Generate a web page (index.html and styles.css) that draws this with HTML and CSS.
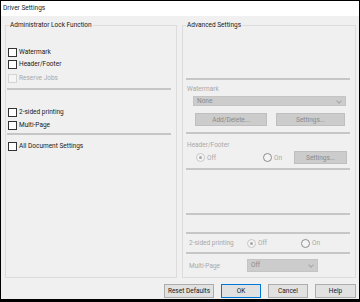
FILE: index.html
```html
<!DOCTYPE html>
<html>
  <head>
    <meta charset="UTF-8">
    <title>Driver Settings</title>
    <link rel="stylesheet" href="styles.css">
  </head>
  <body>
    <div id="dialog">
      <div id="titlebar">Driver Settings</div>

      <div id="panes">
        <div class="group" id="lockGroup">
          <span class="legend">Administrator Lock Function</span>

          <div class="check first"><span class="box"></span>Watermark</div>
          <div class="check"><span class="box"></span>Header/Footer</div>
          <div class="check off reserve"><span class="box"></span>Reserve Jobs</div>
          <div class="sep sepA"></div>

          <div class="check duplex"><span class="box"></span>2-sided printing</div>
          <div class="check multi"><span class="box"></span>Multi-Page</div>
          <div class="sep sepB"></div>
          <div class="check alldoc"><span class="box"></span>All Document Settings</div>
        </div>

        <div class="group" id="advGroup">
          <span class="legend">Advanced Settings</span>

          <div class="sep sep1"></div>
          <div class="label wmLabel">Watermark</div>
          <div class="select wmSelect">None<span class="arrow"></span></div>
          <div class="btnRow">
            <button class="btn dis addDel">Add/Delete...</button>
            <button class="btn dis wmSet">Settings...</button>
          </div>
          <div class="sep sep2"></div>

          <div class="label hfLabel">Header/Footer</div>
          <div class="radioRow">
            <span class="radio hfOff"><span class="dot on"></span>Off</span>
            <span class="radio hfOn"><span class="dot"></span>On</span>
            <button class="btn dis hfSet">Settings...</button>
          </div>
          <div class="sep sep3"></div>
          <div class="sep sep4"></div>
          <div class="sep sep5"></div>

          <div class="optRow duplexRow">
            <span class="optLabel">2-sided printing</span>
            <span class="radio dOff"><span class="dot on"></span>Off</span>
            <span class="radio dOn"><span class="dot"></span>On</span>
          </div>
          <div class="sep sep6"></div>
          <div class="optRow mpRow">
            <span class="optLabel">Multi-Page</span>
            <div class="select mpSelect">Off<span class="arrow"></span></div>
          </div>
        </div>
      </div>

      <div id="footer">
        <button class="btn reset">Reset Defaults</button>
        <button class="btn ok">OK</button>
        <button class="btn">Cancel</button>
        <button class="btn">Help</button>
      </div>
    </div>
  </body>
</html>
```

FILE: styles.css
```css
body {
  margin: 0;
  background: #fff;
  font-family: Roboto, "Noto Sans", sans-serif;
  font-size: 6.5px;
  color: #1a1a1a;
}

#dialog {
  width: 360px;
  height: 302px;
  box-sizing: border-box;
  border: 1px solid #000;
  border-bottom-width: 3px;
  background: #f0f0f0;
}

#titlebar {
  height: 15px;
  line-height: 14px;
  padding-left: 2px;
  background: #fff;
}

#panes {
  display: flex;
  gap: 5px;
  padding: 9px 0 0 4px;
}

.group {
  position: relative;
  height: 253px;
  box-sizing: border-box;
  border: 1px solid #dcdcdc;
}

#lockGroup {
  width: 172px;
}

#advGroup {
  width: 174px;
}

.legend {
  position: absolute;
  top: -6px;
  left: 3px;
  padding: 0 1px;
  line-height: 10px;
  background: #f0f0f0;
}

/* checkboxes */

.check {
  display: flex;
  align-items: center;
  height: 12px;
  padding-left: 2px;
}

.check .box {
  width: 7px;
  height: 7px;
  margin-right: 2px;
  border: 1px solid #333;
  background: #fff;
}

.check.off {
  color: #a8a8a8;
}

.check.off .box {
  border-color: #d4d4d4;
  background: #f4f4f4;
}

.first { margin-top: 20px; }
.reserve { margin-top: 2px; }
.duplex { margin-top: 16px; }
.multi { margin-top: 1px; }
.alldoc { margin-top: 5px; }

.sep {
  height: 0;
  border-top: 2px solid #c6c6c6;
}

.sepA { margin: 4px 5px 0 1px; }
.sepB { margin: 2px 5px 0 1px; }

/* right side */

#advGroup .sep {
  margin-left: 3px;
  margin-right: 5px;
}

.sep1 { margin-top: 52px; }
.sep2 { margin-top: 6px; }
.sep3 { margin-top: 4px; }
.sep4 { margin-top: 43px; }
.sep5 { margin-top: 17px; }
.sep6 { margin-top: 3px; }

.label,
.optLabel,
.radio {
  color: #a8a8a8;
}

.label {
  height: 10px;
  line-height: 10px;
  padding-left: 4px;
}

.wmLabel { margin-top: 4px; }
.hfLabel { margin-top: 6px; }

.select {
  position: relative;
  box-sizing: border-box;
  height: 10px;
  line-height: 9px;
  padding-left: 3px;
  background: #cccccc;
  border: 1px solid #c4c4c4;
  color: #8a8a8a;
}

.select .arrow {
  position: absolute;
  right: 4px;
  top: 2px;
  width: 3px;
  height: 3px;
  border-right: 1px solid #a6a6a6;
  border-bottom: 1px solid #a6a6a6;
  transform: rotate(45deg);
}

.wmSelect {
  width: 153px;
  margin: 2px 0 0 10px;
}

.btn {
  box-sizing: border-box;
  height: 14px;
  padding: 0;
  font-family: inherit;
  font-size: 6.5px;
  color: #1a1a1a;
  background: #e1e1e1;
  border: 1px solid #adadad;
}

.btn.dis {
  height: 13px;
  background: #cccccc;
  border-color: #bfbfbf;
  color: #8a8a8a;
}

.btnRow {
  display: flex;
  margin: 7px 0 0 12px;
}

.addDel { width: 72px; }
.wmSet { width: 69px; margin-left: 9px; }

.radioRow {
  display: flex;
  align-items: center;
  height: 13px;
  margin-top: 1px;
}

.radio {
  display: flex;
  align-items: center;
}

.dot {
  position: relative;
  width: 7px;
  height: 7px;
  margin-right: 2px;
  border: 1px solid #8c8c8c;
  border-radius: 50%;
  background: #f4f4f4;
}

.dot.on {
  border-color: #c8c8c8;
}

.dot.on::after {
  content: "";
  position: absolute;
  left: 2px;
  top: 2px;
  width: 3px;
  height: 3px;
  border-radius: 50%;
  background: #a8a8a8;
}

.hfOff { margin-left: 13px; width: 67px; }
.hfOn { width: 31px; }
.hfSet { width: 53px; }

.optRow {
  display: flex;
  align-items: center;
}

.duplexRow {
  height: 12px;
  margin-top: 3px;
}

.mpRow {
  height: 13px;
  margin-top: 5px;
}

.optLabel {
  width: 58px;
  padding-left: 6px;
}

.dOff { width: 54px; }

.mpSelect {
  width: 71px;
  height: 13px;
  line-height: 11px;
}

.mpSelect .arrow {
  top: 3px;
}

#footer {
  display: flex;
  justify-content: flex-end;
  gap: 7px;
  padding: 6px 3px 0 0;
}

#footer .btn { width: 40px; }
#footer .reset { width: 50px; }
#footer .btn:last-child { width: 41px; }

.ok {
  border-color: #0078d7;
}
```
